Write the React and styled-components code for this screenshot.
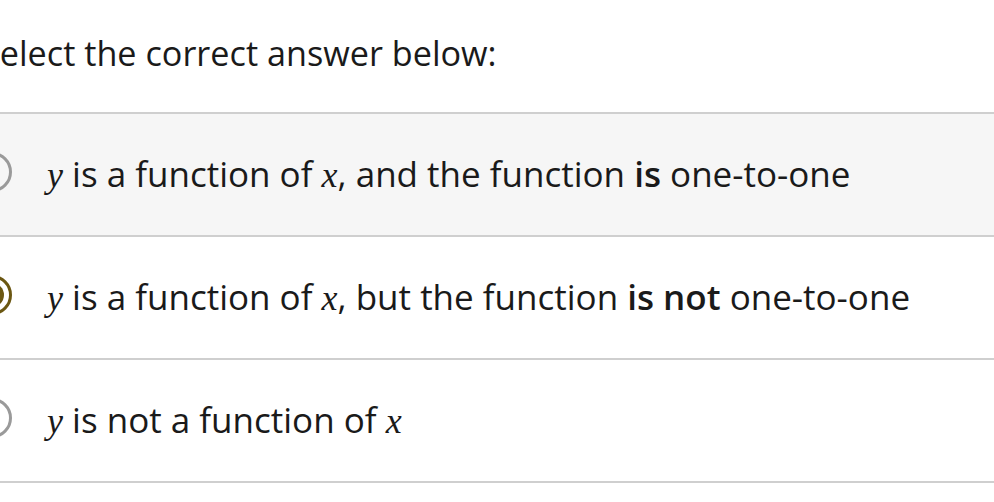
import styled, { createGlobalStyle } from 'styled-components';

const GlobalStyle = createGlobalStyle`
  html, body {
    margin: 0;
    padding: 0;
    background: #ffffff;
    overflow: hidden;
  }
  body {
    font-family: "Open Sans", "Noto Sans", sans-serif;
    color: #1a1a1a;
  }
`;

const options = [
  { id: 'a', parts: [' is a function of ', 'x', ', and the function ', 'is', ' one-to-one'], highlighted: true },
  { id: 'b', parts: [' is a function of ', 'x', ', but the function ', 'is not', ' one-to-one'], selected: true },
  { id: 'c', parts: [' is not a function of ', 'x'] },
];

const App = () => {
  return (
    <>
      <GlobalStyle />
      <Page>
        <Prompt>Select the correct answer below:</Prompt>
        <OptionList>
          {options.map(opt => (
            <Option key={opt.id} highlighted={opt.highlighted}>
              <Radio selected={opt.selected} />
              <Label>
                <MathVar>y</MathVar>
                {opt.parts[0]}
                <MathVar>{opt.parts[1]}</MathVar>
                {opt.parts[2]}
                {opt.parts[3] && <strong>{opt.parts[3]}</strong>}
                {opt.parts[4]}
              </Label>
            </Option>
          ))}
        </OptionList>
      </Page>
    </>
  );
};

export default App;

const Page = styled.div`
  margin-left: -30px;
  width: 1024px;
`;

const Prompt = styled.div`
  height: 112px;
  box-sizing: border-box;
  padding: 30px 0 0 11px;
  font-size: 34.2px;
  line-height: 46px;
`;

const OptionList = styled.div`
  border-bottom: 2px solid #cfcfcf;
`;

const Option = styled.div.withConfig({ shouldForwardProp: p => p !== 'highlighted' })`
  display: flex;
  align-items: center;
  gap: 16px;
  height: 121px;
  border-top: 2px solid #cfcfcf;
  padding-left: 2px;
  background: ${props => (props.highlighted ? '#f6f6f6' : '#ffffff')};
`;

const Radio = styled.span.withConfig({ shouldForwardProp: p => p !== 'selected' })`
  flex: none;
  width: 40px;
  height: 40px;
  box-sizing: border-box;
  border-radius: 50%;
  border: 3px solid ${props => (props.selected ? '#6b5712' : '#9a9a9a')};
  display: flex;
  align-items: center;
  justify-content: center;
  margin-top: -6px;

  &::after {
    content: '';
    display: ${props => (props.selected ? 'block' : 'none')};
    width: 24px;
    height: 24px;
    border-radius: 50%;
    background: #6b5712;
  }
`;

const Label = styled.div`
  font-size: 35px;
  line-height: 46px;
  white-space: nowrap;
  margin-left: 19px;

  strong {
    font-weight: 600;
  }
`;

const MathVar = styled.i`
  font-family: "Liberation Serif", "Times New Roman", serif;
  font-size: 36px;
`;
